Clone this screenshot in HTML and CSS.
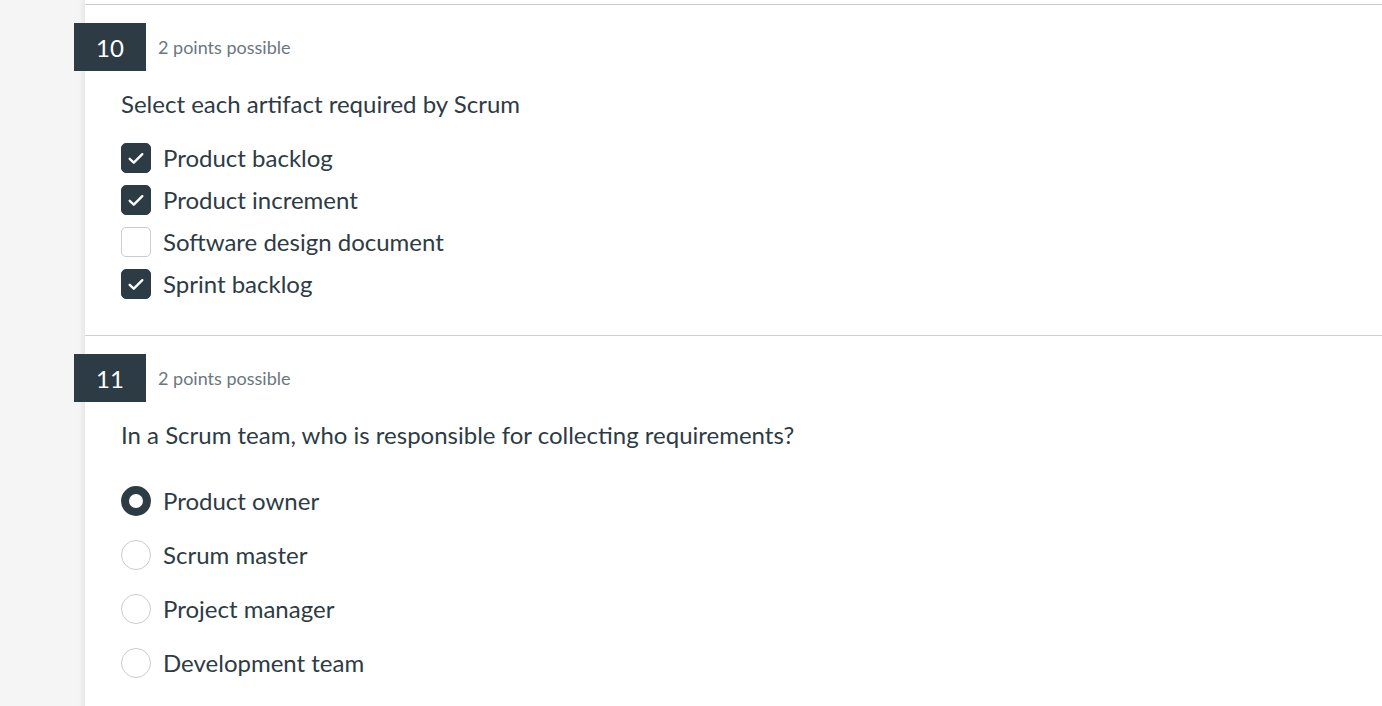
FILE: index.html
```html
<!DOCTYPE html>
<html lang="en">
<head>
<meta charset="utf-8">
<title>Quiz</title>
<link rel="stylesheet" href="styles.css">
</head>
<body>
<div class="page">
  <div class="gutter"></div>
  <main class="panel">
    <section class="question first">
      <div class="q-header">
        <div class="q-num">10</div>
        <div class="q-points">2 points possible</div>
      </div>
      <p class="q-text">Select each artifact required by Scrum</p>
      <ul class="answers check-list">
        <li class="answer"><span class="checkbox checked"><svg class="check" viewBox="0 0 16 16"><path d="M3.4 8.6 L6.4 11.4 L12.6 5.2" fill="none" stroke="#fff" stroke-width="1.7" stroke-linecap="round" stroke-linejoin="round"/></svg></span><span class="label">Product backlog</span></li>
        <li class="answer"><span class="checkbox checked"><svg class="check" viewBox="0 0 16 16"><path d="M3.4 8.6 L6.4 11.4 L12.6 5.2" fill="none" stroke="#fff" stroke-width="1.7" stroke-linecap="round" stroke-linejoin="round"/></svg></span><span class="label">Product increment</span></li>
        <li class="answer"><span class="checkbox"></span><span class="label">Software design document</span></li>
        <li class="answer"><span class="checkbox checked"><svg class="check" viewBox="0 0 16 16"><path d="M3.4 8.6 L6.4 11.4 L12.6 5.2" fill="none" stroke="#fff" stroke-width="1.7" stroke-linecap="round" stroke-linejoin="round"/></svg></span><span class="label">Sprint backlog</span></li>
      </ul>
    </section>
    <section class="question second">
      <div class="q-header">
        <div class="q-num">11</div>
        <div class="q-points">2 points possible</div>
      </div>
      <p class="q-text">In a Scrum team, who is responsible for collecting requirements?</p>
      <ul class="answers radio-list">
        <li class="answer"><span class="radio selected"></span><span class="label">Product owner</span></li>
        <li class="answer"><span class="radio"></span><span class="label">Scrum master</span></li>
        <li class="answer"><span class="radio"></span><span class="label">Project manager</span></li>
        <li class="answer"><span class="radio"></span><span class="label">Development team</span></li>
      </ul>
    </section>
  </main>
</div>
</body>
</html>
```
FILE: styles.css
```css
html, body {
  margin: 0;
  padding: 0;
  background: #f5f5f5;
  font-family: Lato, "Open Sans", "Liberation Sans", sans-serif;
  color: #2d3b45;
  overflow: hidden;
}
.page {
  display: flex;
  min-height: 706px;
}
.gutter {
  width: 85px;
  flex: 0 0 85px;
  background: #f5f5f5;
}
.panel {
  flex: 1;
  background: #fff;
  box-shadow: -3px 0 5px rgba(0,0,0,0.06);
  padding-top: 4px;
}
.question {
  border-top: 1px solid #c7cdd1;
  padding-top: 18px;
  padding-bottom: 30px;
}
.question.second {
  border-top-color: #cfcfcf;
}
.q-header {
  display: flex;
  align-items: center;
  margin-left: -11px;
}
.q-num {
  width: 72px;
  height: 48px;
  background: #2d3b45;
  color: #fff;
  font-size: 24px;
  display: flex;
  align-items: center;
  justify-content: center;
}
.q-points {
  margin-left: 12px;
  font-size: 18px;
  color: #6b7780;
  margin-bottom: 1px;
}
.q-text {
  margin: 18px 0 0 36px;
  font-size: 24px;
  line-height: 30px;
}
.answers {
  list-style: none;
  margin: 18px 0 0 36px;
  padding: 0;
}
.radio-list {
  margin-top: 24px;
}
.answer {
  display: flex;
  align-items: center;
  gap: 12px;
  height: 42px;
  font-size: 24px;
}
.label {
  margin-bottom: 2px;
}
.radio-list .answer {
  height: 54px;
}
.checkbox {
  width: 30px;
  height: 30px;
  box-sizing: border-box;
  border: 1px solid #c7cdd1;
  border-radius: 5px;
  background: #fff;
  display: flex;
  align-items: center;
  justify-content: center;
}
.checkbox.checked {
  background: #2d3b45;
  border-color: #2d3b45;
}
.check {
  width: 22px;
  height: 22px;
  display: block;
}
.radio {
  width: 30px;
  height: 30px;
  box-sizing: border-box;
  border: 1px solid #c7cdd1;
  border-radius: 50%;
  background: #fff;
}
.radio.selected {
  border: 8px solid #2d3b45;
}
```
